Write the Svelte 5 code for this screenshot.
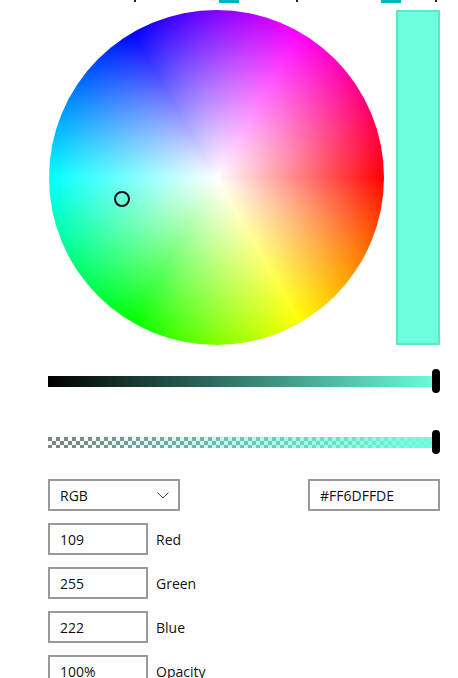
<script>
  // current colour shown by the picker
  let red = 109;
  let green = 255;
  let blue = 222;
  let colour = `rgb(${red}, ${green}, ${blue})`;

  let channels = [
    { value: "109", label: "Red" },
    { value: "255", label: "Green" },
    { value: "222", label: "Blue" },
    { value: "100%", label: "Opacity" }
  ];
</script>

<div class="page" style="--colour: {colour}">
  <div class="tabs">
    <div class="tab"><span class="tick"></span><span class="bar"></span></div>
    <div class="tab"><span class="tick"></span><span class="bar"></span></div>
    <div class="tab"><span class="tick"></span></div>
  </div>

  <div class="spectrum">
    <div class="wheel">
      <span class="marker"></span>
    </div>
    <div class="preview"></div>
  </div>

  <div class="slider value-slider">
    <div class="track"></div>
    <span class="thumb"></span>
  </div>

  <div class="slider alpha-slider">
    <div class="track"></div>
    <span class="thumb"></span>
  </div>

  <div class="mode-row">
    <div class="box select">
      <span>RGB</span>
      <svg width="12" height="7" viewBox="0 0 12 7">
        <path d="M0.5 0.5 L6 6 L11.5 0.5" fill="none" stroke="#555" stroke-width="1" />
      </svg>
    </div>
    <div class="box hex">#FF6DFFDE</div>
  </div>

  {#each channels as channel}
    <div class="channel">
      <div class="box number">{channel.value}</div>
      <span class="label">{channel.label}</span>
    </div>
  {/each}
</div>

<style>
  :global(body) {
    margin: 0;
    background: #fff;
  }

  .page {
    width: 458px;
    height: 678px;
    overflow: hidden;
    font-family: "Open Sans", "Noto Sans", sans-serif;
    font-size: 14px;
    color: #111;
  }

  .tabs {
    display: flex;
    height: 3px;
    margin-left: 134px;
    overflow: hidden;
  }

  .tab {
    flex: none;
    width: 162px;
    display: flex;
  }

  .tab:last-child {
    width: 28px;
    margin-left: -23px;
  }

  .tick {
    width: 2px;
    height: 2px;
    background: #222;
  }

  .bar {
    width: 20px;
    height: 3px;
    margin-left: 83px;
    background: #00b4c4;
  }

  .spectrum {
    display: flex;
    align-items: flex-start;
    margin: 7px 18px 0 49px;
    gap: 12px;
  }

  .wheel {
    position: relative;
    width: 335px;
    height: 335px;
    border-radius: 50%;
    background:
      radial-gradient(circle closest-side, #fff, rgba(255, 255, 255, 0)),
      conic-gradient(from 90deg, #f00, #ff0, #0f0, #0ff, #00f, #f0f, #f00);
  }

  .marker {
    position: absolute;
    left: 65px;
    top: 181px;
    width: 12px;
    height: 12px;
    border: 2px solid #111;
    border-radius: 50%;
  }

  .preview {
    box-sizing: border-box;
    width: 44px;
    height: 335px;
    background: var(--colour);
    border: 2px solid rgba(0, 0, 0, 0.1);
  }

  .slider {
    position: relative;
    margin: 0 18px 0 48px;
  }

  .value-slider {
    margin-top: 31px;
  }

  .alpha-slider {
    margin-top: 50px;
  }

  .track {
    height: 11px;
  }

  .value-slider .track {
    background: linear-gradient(to right, #000, var(--colour));
  }

  .alpha-slider .track {
    background:
      linear-gradient(to right, rgba(109, 255, 222, 0), var(--colour)),
      repeating-conic-gradient(#808080 0 25%, #fff 0 50%) 4px 0 / 8px 8px;
  }

  .thumb {
    position: absolute;
    right: 0;
    top: -7px;
    width: 8px;
    height: 24px;
    border-radius: 4px;
    background: #000;
  }

  .mode-row {
    display: flex;
    justify-content: space-between;
    margin: 31px 18px 0 48px;
  }

  .box {
    box-sizing: border-box;
    height: 32px;
    border: 2px solid #999;
    padding-left: 10px;
    display: flex;
    align-items: center;
    background: #fff;
  }

  .select {
    width: 132px;
    justify-content: space-between;
    padding-right: 9px;
  }

  .hex {
    width: 132px;
  }

  .channel {
    display: flex;
    align-items: center;
    gap: 8px;
    margin: 12px 0 0 48px;
  }

  .number {
    width: 100px;
  }
</style>
